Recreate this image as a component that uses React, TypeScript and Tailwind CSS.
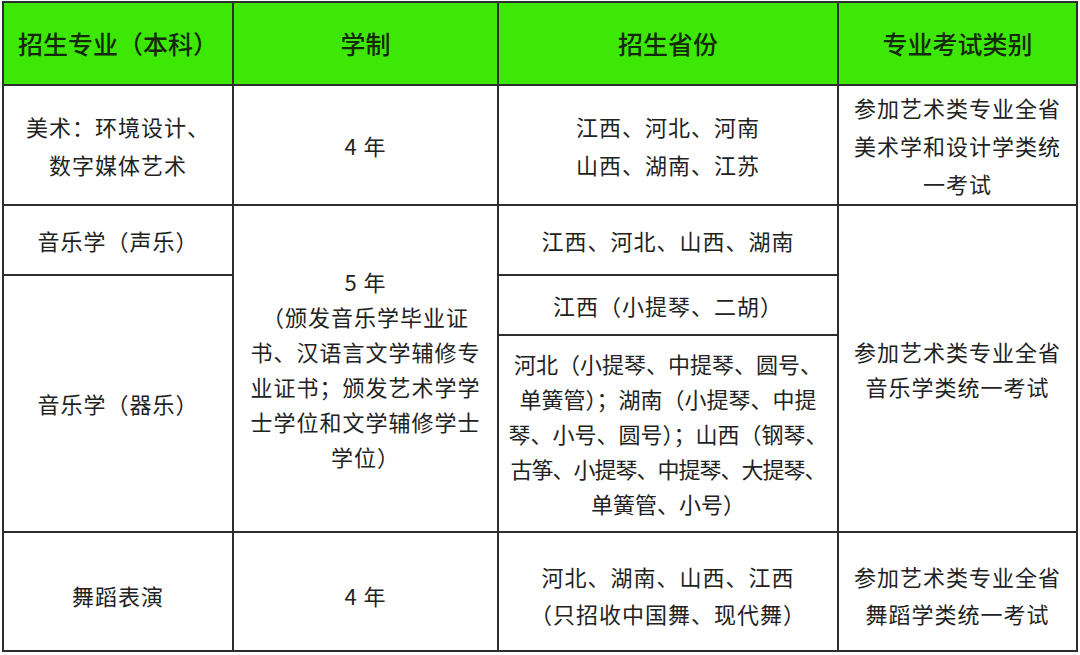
const cell =
  'flex flex-col items-center justify-center border-r-2 border-b-2 border-[#2e2e2e] text-center whitespace-nowrap'

const head = `${cell} bg-[#3de806] text-[25px] font-medium text-[#142a0a]`
const body = `${cell} bg-white text-[22px] tracking-[1px] text-[#222]`

function Lines({ lines, leading = 'leading-[36px]' }: { readonly lines: readonly string[]; readonly leading?: string }) {
  return (
    <div className={leading}>
      {lines.map((l, i) => (
        <div key={i}>{l}</div>
      ))}
    </div>
  )
}

export default function App() {
  return (
    <div
      className="min-h-[655px] w-[1080px] bg-white pt-[1px] pl-[2px]"
      style={{ fontFamily: '"Noto Sans CJK SC", "Noto Sans", sans-serif' }}
    >
      <div className="grid w-fit grid-cols-[230px_265px_340px_239px] grid-rows-[83px_120px_70px_60px_197px_119px] border-t-2 border-l-2 border-[#2e2e2e]">
        <div className={head}>招生专业（本科）</div>
        <div className={head}>学制</div>
        <div className={head}>招生省份</div>
        <div className={head}>专业考试类别</div>

        <div className={body}>
          <Lines lines={['美术：环境设计、', '数字媒体艺术']} leading="leading-[38px]" />
        </div>
        <div className={body}>4 年</div>
        <div className={body}>
          <Lines lines={['江西、河北、河南', '山西、湖南、江苏']} leading="leading-[38px]" />
        </div>
        <div className={body}>
          <Lines lines={['参加艺术类专业全省', '美术学和设计学类统', '一考试']} leading="leading-[38px]" />
        </div>

        <div className={body}>音乐学（声乐）</div>
        <div className={`${body} row-span-3`}>
          <Lines
            lines={['5 年', '（颁发音乐学毕业证', '书、汉语言文学辅修专', '业证书；颁发艺术学学', '士学位和文学辅修学士', '学位）']}
            leading="leading-[35px]"
          />
        </div>
        <div className={body}>江西、河北、山西、湖南</div>
        <div className={`${body} row-span-3`}>
          <Lines lines={['参加艺术类专业全省', '音乐学类统一考试']} leading="leading-[35px]" />
        </div>

        <div className={`${body} row-span-2`}>音乐学（器乐）</div>
        <div className={body}>江西（小提琴、二胡）</div>
        <div className={`${body} tracking-normal`}>
          <div className="leading-[35px]">
            <div>河北（小提琴、中提琴、圆号、</div>
            <div>单簧管）；湖南（小提琴、中提</div>
            <div>琴、小号、圆号）；山西（钢琴、</div>
            <div className="tracking-[-1px]">古筝、小提琴、中提琴、大提琴、</div>
            <div>单簧管、小号）</div>
          </div>
        </div>

        <div className={`${body} pt-[8px]`}>舞蹈表演</div>
        <div className={`${body} pt-[8px]`}>4 年</div>
        <div className={`${body} pt-[6px]`}>
          <Lines lines={['河北、湖南、山西、江西', '（只招收中国舞、现代舞）']} leading="leading-[37px]" />
        </div>
        <div className={`${body} pt-[6px]`}>
          <Lines lines={['参加艺术类专业全省', '舞蹈学类统一考试']} leading="leading-[37px]" />
        </div>
      </div>
    </div>
  )
}
